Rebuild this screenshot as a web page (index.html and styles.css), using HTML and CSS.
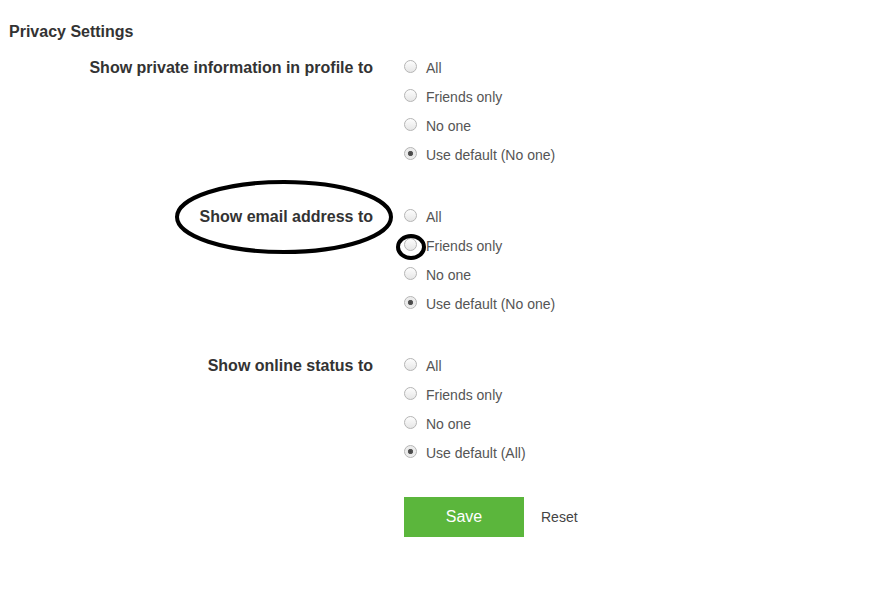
FILE: index.html
```html
<!DOCTYPE html>
<html>
<head>
<meta charset="utf-8">
<link rel="stylesheet" href="styles.css">
</head>
<body>
<div class="page">
  <h1 class="title">Privacy Settings</h1>
  <form class="form">
    <div class="group">
      <div class="label">Show private information in profile to</div>
      <div class="options">
        <label class="opt"><input type="radio" name="p"><span>All</span></label>
        <label class="opt"><input type="radio" name="p"><span>Friends only</span></label>
        <label class="opt"><input type="radio" name="p"><span>No one</span></label>
        <label class="opt"><input type="radio" name="p" checked><span>Use default (No one)</span></label>
      </div>
    </div>
    <div class="group">
      <div class="label">Show email address to</div>
      <div class="options">
        <label class="opt"><input type="radio" name="e"><span>All</span></label>
        <label class="opt"><input type="radio" name="e"><span>Friends only</span></label>
        <label class="opt"><input type="radio" name="e"><span>No one</span></label>
        <label class="opt"><input type="radio" name="e" checked><span>Use default (No one)</span></label>
      </div>
    </div>
    <div class="group">
      <div class="label">Show online status to</div>
      <div class="options">
        <label class="opt"><input type="radio" name="o"><span>All</span></label>
        <label class="opt"><input type="radio" name="o"><span>Friends only</span></label>
        <label class="opt"><input type="radio" name="o"><span>No one</span></label>
        <label class="opt"><input type="radio" name="o" checked><span>Use default (All)</span></label>
      </div>
    </div>
    <div class="actions">
      <button type="button" class="save">Save</button>
      <a class="reset">Reset</a>
    </div>
  </form>
  <svg class="marks" width="886" height="591" viewBox="0 0 886 591">
    <ellipse cx="284" cy="217" rx="107" ry="35" fill="none" stroke="#000" stroke-width="4"/>
    <ellipse cx="411" cy="247" rx="13" ry="11" fill="none" stroke="#000" stroke-width="4"/>
  </svg>
</div>
</body>
</html>
```
FILE: styles.css
```css
html, body {
  margin: 0;
  padding: 0;
  background: #fff;
}
.page {
  position: relative;
  width: 886px;
  height: 591px;
  padding: 22px 0 0 9px;
  box-sizing: border-box;
  font-family: "Liberation Sans", Arial, sans-serif;
}
.title {
  margin: 0;
  font-size: 16px;
  line-height: 20px;
  font-weight: bold;
  color: #333;
}
.form {
  margin-top: 11px;
}
.group {
  display: grid;
  grid-template-columns: 364px auto;
  column-gap: 31px;
  margin-bottom: 33px;
}
.label {
  text-align: right;
  font-size: 16px;
  font-weight: bold;
  color: #333;
  line-height: 29px;
  margin-top: 0;
}
.options {
  display: flex;
  flex-direction: column;
}
.opt {
  display: flex;
  align-items: center;
  height: 29px;
  font-size: 14px;
  color: #555;
}
.opt input {
  appearance: none;
  -webkit-appearance: none;
  width: 13px;
  height: 13px;
  margin: 0 9px 0 0;
  border-radius: 50%;
  border: 1px solid #b5b5b5;
  background: linear-gradient(#fdfdfd, #e6e6e6);
  box-sizing: border-box;
  position: relative;
  top: -1px;
}
.opt input:checked {
  background: radial-gradient(circle, #444 0, #555 2.2px, #e8e8e8 3px, #f5f5f5 100%);
}
.actions {
  display: flex;
  align-items: center;
  margin-left: 395px;
  margin-top: -3px;
  gap: 17px;
}
.save {
  width: 120px;
  height: 40px;
  border: none;
  background: #5bb63c;
  color: #fff;
  font-family: "Liberation Sans", Arial, sans-serif;
  font-size: 16px;
  padding: 0;
}
.reset {
  font-size: 14px;
  color: #444;
}
.marks {
  position: absolute;
  left: 0;
  top: 0;
  pointer-events: none;
}
```
